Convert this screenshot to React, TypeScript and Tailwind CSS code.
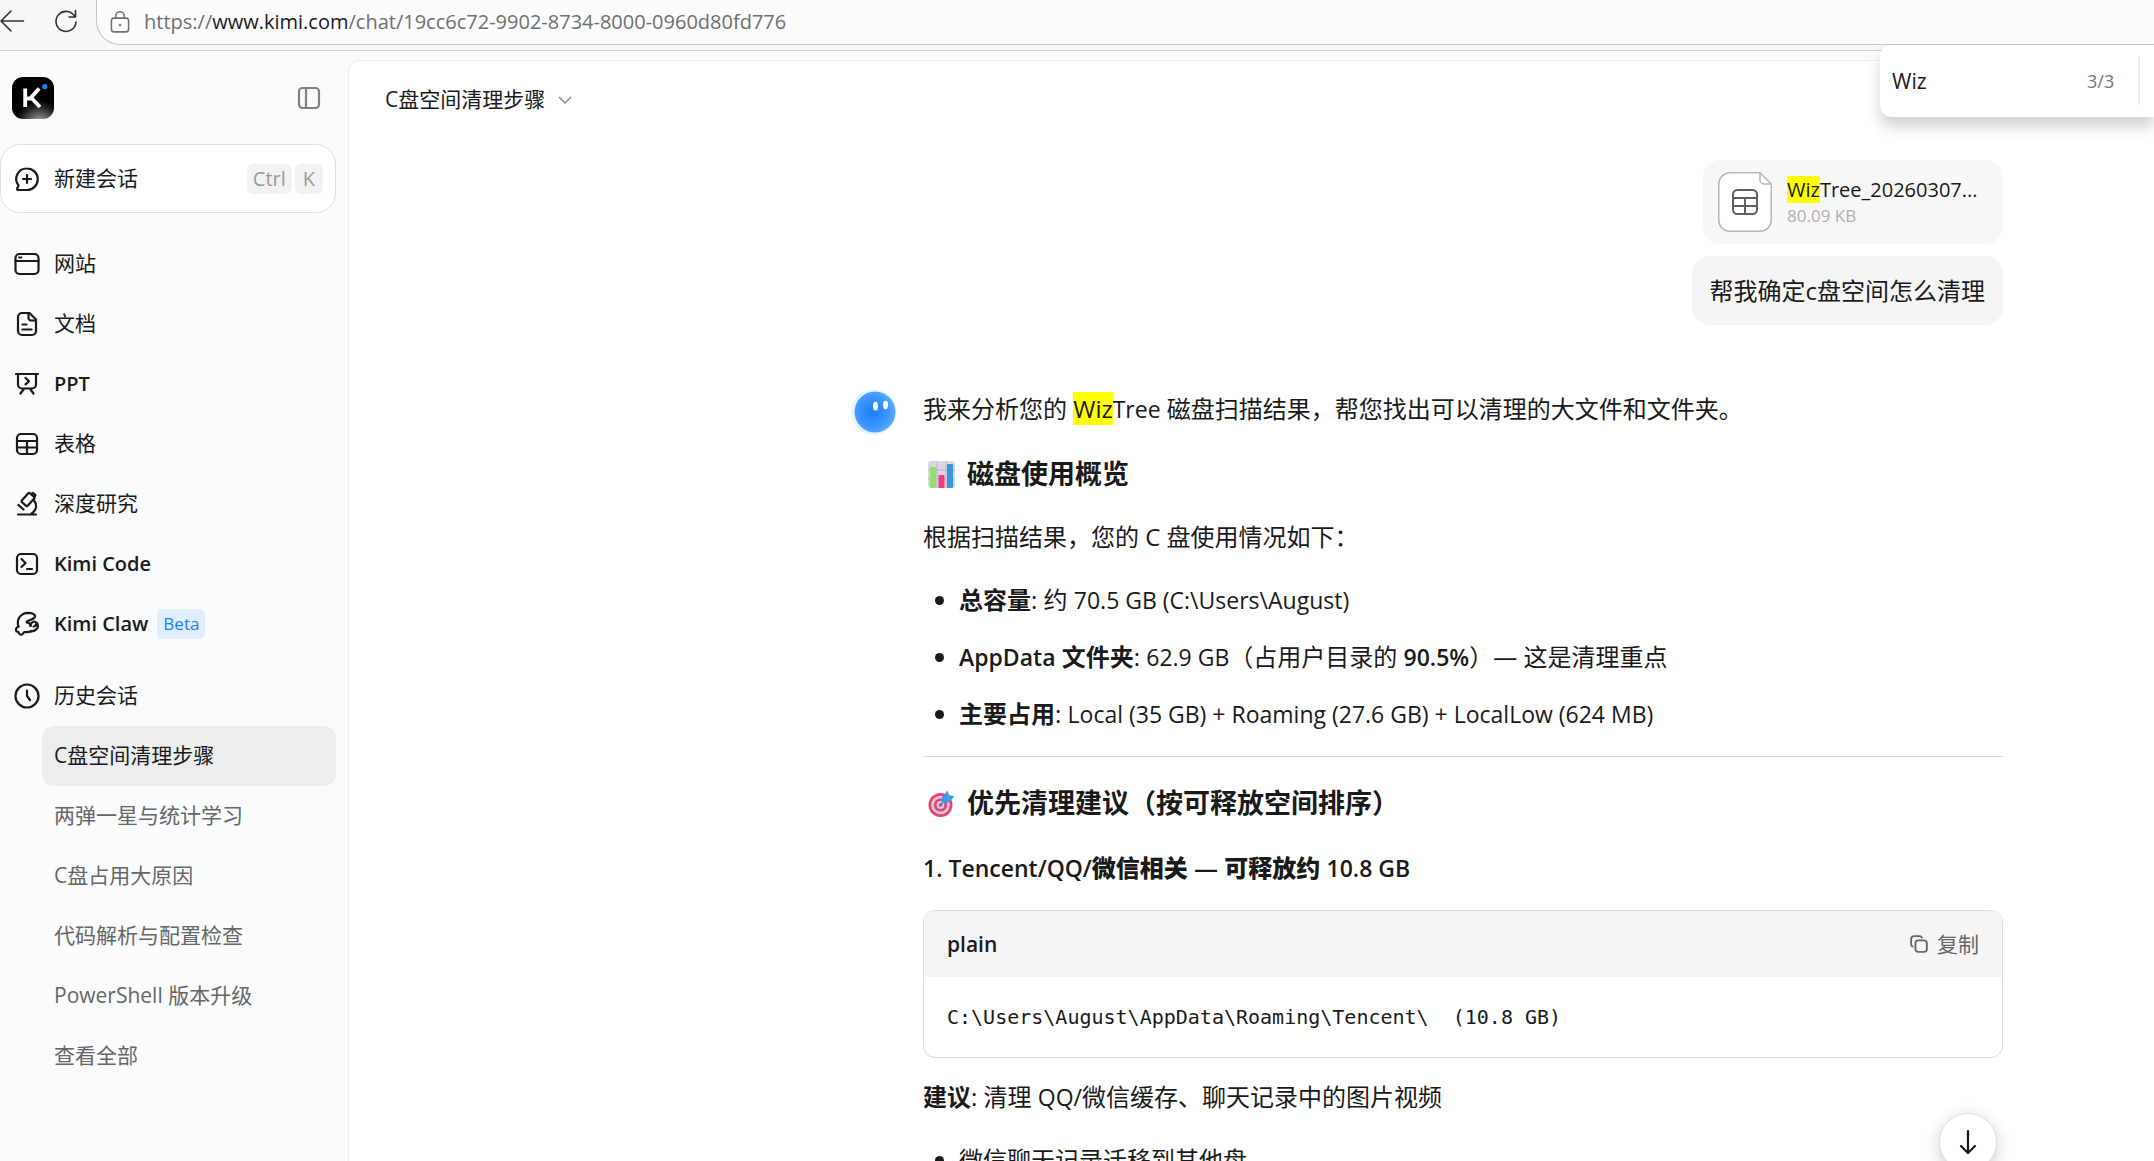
import React from "react";

type IconProps = { className?: string; children: React.ReactNode };

const Icon = ({ className = "size-7", children }: IconProps) => (
  <svg
    viewBox="0 0 28 28"
    fill="none"
    stroke="currentColor"
    strokeWidth="2.2"
    strokeLinecap="round"
    strokeLinejoin="round"
    className={`shrink-0 ${className}`}
    aria-hidden="true"
  >
    {children}
  </svg>
);

const navItems = [
  {
    label: "网站",
    icon: (
      <>
        <rect x="2.5" y="4" width="23" height="20" rx="4" />
        <path d="M2.5 11h23" />
        <path d="M6 7.500h2.500" strokeWidth="1.8" />
      </>
    ),
  },
  {
    label: "文档",
    icon: (
      <>
        <path d="M16.5 3H9a4 4 0 0 0-4 4v14a4 4 0 0 0 4 4h10a4 4 0 0 0 4-4V9.500z" />
        <path d="M15.5 3.500V8a2.500 2.500 0 0 0 2.500 2.500h4.500M9.500 14.500h4M9.500 19.500h9" />
      </>
    ),
  },
  {
    label: "PPT",
    latin: true,
    icon: (
      <>
        <path d="M3 4h22M5 4v10.500a4 4 0 0 0 4 4h10a4 4 0 0 0 4-4V4" />
        <path d="M12.500 8l3.500 3.200-3.500 3.200M10.500 19.500l-3 4M17.500 19.500l3 4" />
      </>
    ),
  },
  {
    label: "表格",
    icon: (
      <>
        <rect x="4" y="4" width="20" height="20" rx="4" />
        <path d="M4 11h20M4 17.500h20M14 11v13" />
      </>
    ),
  },
  {
    label: "深度研究",
    icon: (
      <>
        <rect x="11" y="3.500" width="8" height="12" rx="1.5" transform="rotate(42 15 9.5)" />
        <path d="M18.500 4l1.500-1 2.500 2-1 2" />
        <path d="M5.500 15l5 4.500M5 24.500h18M21 10.500c3.500 4.500 2.500 10-3 13.500" />
      </>
    ),
  },
  {
    label: "Kimi Code",
    latin: true,
    icon: (
      <>
        <rect x="4" y="4" width="20" height="20" rx="4" />
        <path d="M8.500 9l4 4-4 4M14 19h5" />
      </>
    ),
  },
  {
    label: "Kimi Claw",
    latin: true,
    beta: true,
    icon: (
      <>
        <path d="M5.500 16.500C3 9 8 3 15 2.800c4 0 7.500 1.500 7 4-.5 2-3 2.500-5.500 3.500-1.500.5-2.500 1-3 2 2.500.2 4 1.200 4 3.700" />
        <path d="M17.500 16c0-2.500 1.500-4 3.500-4.500 3 .5 4 2.500 4 4.500-.5 3-3.500 5-7 5.500M20.500 16.500c1.500 0 2.500-1 2.500-2.500" />
        <path d="M5.500 16.500c-2 .5-3.500 3-2 5l2 .5c0 2 2 3 3.500 2.500 1-.3 1-2 2.500-2.500 3 .5 5 0 7-1" />
      </>
    ),
  },
];

const historyItems = [
  "两弹一星与统计学习",
  "C盘占用大原因",
  "代码解析与配置检查",
  "PowerShell 版本升级",
  "查看全部",
];

const BrowserBar = () => (
  <div className="flex h-[51px] shrink-0 items-start border-b border-[#cfcfcf] bg-[#f7f7f7]">
    <button aria-label="返回" className="mt-[7px] w-7 text-[#303030]">
      <Icon>
        <path d="M23.500 14H1M11 4L1 14l10 10" strokeWidth="1.6" />
      </Icon>
    </button>
    <button aria-label="刷新" className="mt-[7px] ml-6 w-7 text-[#303030]">
      <Icon>
        <path d="M23 10A10 10 0 1 0 24 15M23.500 3.500V10H17" strokeWidth="1.6" />
      </Icon>
    </button>
    <div className="ml-4 flex h-[45px] flex-1 items-center gap-3 rounded-bl-[24px] border-b border-l border-[#c4c4c4] bg-[#fcfcfc] pl-[11px]">
      <Icon className="size-6 text-[#707070]">
        <rect x="4" y="9.500" width="20" height="16" rx="3" strokeWidth="1.8" />
        <path d="M9 9.500V7a5 5 0 0 1 10 0v2.500" strokeWidth="1.8" />
        <circle cx="14" cy="17.500" r="1" fill="currentColor" strokeWidth="1" />
      </Icon>
      <div role="textbox" aria-label="地址" className="text-xl whitespace-nowrap text-[#707070]">
        https://<span className="text-[#1b1b1b]">www.kimi.com</span>/chat/19cc6c72-9902-8734-8000-0960d80fd776
      </div>
    </div>
  </div>
);

const FindBar = () => (
  <div className="absolute top-[45px] right-0 flex h-[72px] w-[274px] items-center rounded-l-xl bg-white pl-3 shadow-[0_10px_14px_rgba(0,0,0,0.18)]">
    <input
      aria-label="在页面上查找"
      defaultValue="Wiz"
      className="w-[195px] bg-transparent pt-0.5 text-[21px] text-[#1b1b1b] outline-none"
    />
    <span className="text-lg text-[#767676]">3/3</span>
    <div className="ml-auto h-12 w-4 border-l-2 border-[#ebebeb]" />
  </div>
);

const Logo = () => (
  <svg viewBox="0 0 42 42" className="size-[42px]" role="img" aria-label="Kimi">
    <defs>
      <radialGradient id="moon" cx="0.65" cy="1.15" r="0.6">
        <stop offset="0" stopColor="#d0d0d0" />
        <stop offset="0.4" stopColor="#6a6a6a" />
        <stop offset="0.75" stopColor="#222" />
        <stop offset="1" stopColor="#000" />
      </radialGradient>
    </defs>
    <rect width="42" height="42" rx="11" fill="url(#moon)" />
    <path d="M13.200 11.500V30M27.200 11.500L18 21.500h-4.500M19 20.500L28 30" fill="none" stroke="#fff" strokeWidth="3.8" />
    <circle cx="32.700" cy="9.700" r="2.6" fill="#1783ff" />
  </svg>
);

const Sidebar = () => (
  <aside className="w-[348px] shrink-0 pr-3 text-[21px] text-[#1a1a1a]">
    <div className="flex items-center justify-between pt-[26px] pr-[13px] pl-3">
      <Logo />
      <button aria-label="收起侧边栏" className="text-[#808080]">
        <Icon>
          <rect x="4" y="4" width="20" height="20" rx="3.5" />
          <path d="M11 4v20" />
        </Icon>
      </button>
    </div>
    <button className="mt-[25px] flex h-[69px] w-[336px] items-center rounded-[20px] border border-[#e0e0e0] bg-white px-3 text-left">
      <Icon>
        <path d="M14 3.500A10.500 10.500 0 1 1 14 25H5a1 1 0 0 1-.8-1.500L5.500 20.500A10.500 10.500 0 0 1 14 3.500zM14 10v8M10 14h8" />
      </Icon>
      <span className="ml-[13px] flex-1">新建会话</span>
      <kbd className="rounded-md bg-[#f2f2f2] px-1.5 font-[inherit] text-xl leading-[30px] text-[#999]">Ctrl</kbd>
      <kbd className="ml-[3px] rounded-md bg-[#f2f2f2] px-2 font-[inherit] text-xl leading-[30px] text-[#999]">K</kbd>
    </button>
    <nav className="mt-[21px]">
      {navItems.map((item) => (
        <a key={item.label} href="#" className="flex h-[60px] items-center gap-[13px] pl-[13px]">
          <Icon>{item.icon}</Icon>
          <span className="flex items-center gap-[9px]">
            <span className={item.latin ? "text-xl font-semibold" : ""}>{item.label}</span>
            {item.beta && (
              <span className="rounded-md bg-[#e1edfb] px-1.5 text-[17px] leading-[30px] text-[#1783ff]">Beta</span>
            )}
          </span>
        </a>
      ))}
      <a href="#" className="mt-3 flex h-[60px] items-center gap-[13px] pl-[13px]">
        <Icon>
          <circle cx="14" cy="14" r="11.5" />
          <path d="M14 8.500V14l3 4" />
        </Icon>
        历史会话
      </a>
      <div className="pl-[42px]">
        <a href="#" className="flex h-[60px] items-center rounded-xl bg-[#ecedef] pl-3">
          C盘空间清理步骤
        </a>
        {historyItems.map((title) => (
          <a key={title} href="#" className="flex h-[60px] items-center pl-3 text-[#666]">
            {title}
          </a>
        ))}
      </div>
    </nav>
  </aside>
);

const Mark = ({ children }: { children: React.ReactNode }) => (
  <mark className="bg-[#ffff00] text-inherit">{children}</mark>
);

// latin runs sit a touch smaller than the chinese text around them
const En = ({ children }: { children: React.ReactNode }) => <span className="text-[23px]">{children}</span>;

const FileCard = () => (
  <div className="flex h-[84px] w-[300px] items-center gap-[15px] rounded-[18px] bg-[#f7f7f7] px-[15px]">
    <svg viewBox="0 0 54 60" className="h-[60px] w-[54px] shrink-0" fill="none" aria-hidden="true">
      <path
        d="M42 .75H12A11.250 11.250 0 0 0 .75 12v36A11.250 11.250 0 0 0 12 59.250h30A11.250 11.250 0 0 0 53.250 48V12z"
        fill="#fff"
        stroke="#b5b5b5"
        strokeWidth="1.5"
      />
      <path d="M42 .75V8a4 4 0 0 0 4 4h7.250" stroke="#b5b5b5" strokeWidth="1.5" />
      <rect x="15" y="18" width="24" height="24" rx="4.5" stroke="#606060" strokeWidth="2" />
      <path d="M15 26h24M15 34h24M27 26v16" stroke="#606060" strokeWidth="2" />
    </svg>
    <div className="min-w-0">
      <div className="truncate text-xl leading-7 text-[#1a1a1a]">
        <Mark>Wiz</Mark>Tree_20260307...
      </div>
      <div className="text-[17px] leading-6 text-[#b0b0b0]">80.09 KB</div>
    </div>
  </div>
);

const Avatar = () => (
  <svg viewBox="0 0 48 48" className="size-12 shrink-0" role="img" aria-label="Kimi">
    <defs>
      <radialGradient id="face" cx="0.45" cy="0.5" r="0.55">
        <stop offset="0" stopColor="#1a7dff" />
        <stop offset="0.7" stopColor="#3f97ff" />
        <stop offset="1" stopColor="#5cabff" />
      </radialGradient>
    </defs>
    <circle cx="23" cy="24" r="23" fill="#e6f4ff" />
    <circle cx="24" cy="24" r="20.5" fill="url(#face)" />
    <ellipse cx="24.500" cy="18" rx="2.5" ry="4.5" fill="#fff" />
    <ellipse cx="34.500" cy="17" rx="2.5" ry="4.2" fill="#fff" />
  </svg>
);

const ChartEmoji = () => (
  <svg viewBox="0 0 27 27" className="size-[27px]" aria-hidden="true">
    <rect width="27" height="27" rx="3" fill="#dcd6e4" />
    <path d="M9 0v27M18 0v27M0 9h27M0 18h27" stroke="#b9b2c4" />
    <rect x="2" y="6" width="6" height="21" rx="1" fill="#8fe068" />
    <rect x="10.500" y="14" width="6" height="13" rx="1" fill="#ea3f7c" />
    <rect x="19" y="3" width="6" height="24" rx="1" fill="#3b94e0" />
  </svg>
);

const TargetEmoji = () => (
  <svg viewBox="0 0 27 27" className="size-[27px]" aria-hidden="true">
    <circle cx="12.500" cy="15" r="12" fill="#e5446d" />
    <circle cx="12.500" cy="15" r="9.3" fill="#dccbe0" />
    <circle cx="12.500" cy="15" r="6.6" fill="#e5446d" />
    <circle cx="12.500" cy="15" r="3.9" fill="#dccbe0" />
    <circle cx="12.500" cy="15" r="1.8" fill="#e5446d" />
    <path d="M12.500 15L21 6" stroke="#2b7cd0" strokeWidth="1.5" />
    <path d="M14 12.500V8l5.500-7.500L21 5l5.500 1.500L20 13h-5z" fill="#3d9be9" />
  </svg>
);

const Heading = ({ icon, children }: { icon: React.ReactNode; children: React.ReactNode }) => (
  <h3 className="flex items-center gap-3 pl-[5px] text-[27px] leading-[42px] font-bold">
    {icon}
    {children}
  </h3>
);

const CodeBlock = () => (
  <div className="overflow-hidden rounded-xl border border-[#dcdcdc]">
    <div className="flex h-[66px] items-center justify-between bg-[#f5f5f5] px-[23px] text-[21px]">
      <span className="font-semibold">plain</span>
      <button className="flex items-center gap-2 text-[#666]">
        <Icon className="size-5">
          <rect x="9" y="9" width="16" height="16" rx="4" strokeWidth="2.6" />
          <path d="M5 17.500A3 3 0 0 1 3 15V7a4 4 0 0 1 4-4h8a3 3 0 0 1 3 2" strokeWidth="2.6" />
        </Icon>
        复制
      </button>
    </div>
    <pre className="px-[23px] font-['DejaVu_Sans_Mono','Noto_Sans_CJK_SC',monospace] text-xl leading-[80px]">
      {"C:\\Users\\August\\AppData\\Roaming\\Tencent\\  (10.8 GB)"}
    </pre>
  </div>
);

const Answer = () => (
  <div className="flex-1 text-2xl leading-[42px] text-[#1a1a1a]">
    <p>
      我来分析您的 <Mark>Wiz</Mark>
      <En>Tree</En> 磁盘扫描结果，帮您找出可以清理的大文件和文件夹。
    </p>
    <div className="mt-[23px]">
      <Heading icon={<ChartEmoji />}>磁盘使用概览</Heading>
    </div>
    <p className="mt-[21px]">根据扫描结果，您的 C 盘使用情况如下：</p>
    <ul className="mt-[21px] list-disc space-y-[15px] pl-9">
      <li>
        <strong>总容量</strong>: 约 <En>70.5 GB (C:\Users\August)</En>
      </li>
      <li>
        <strong className="font-semibold">
          <En>AppData</En>{" "}
        </strong>
        <strong>文件夹</strong>: <En>62.9 GB</En>（占用户目录的{" "}
        <strong className="font-semibold">
          <En>90.5%</En>
        </strong>
        ）— 这是清理重点
      </li>
      <li>
        <strong>主要占用</strong>: <En>Local (35 GB) + Roaming (27.6 GB) + LocalLow (624 MB)</En>
      </li>
    </ul>
    <hr className="mt-[21px] border-[#dcdcdc]" />
    <div className="mt-[25px]">
      <Heading icon={<TargetEmoji />}>优先清理建议（按可释放空间排序）</Heading>
    </div>
    <h4 className="mt-[23px] font-semibold">
      <En>1. Tencent/QQ/</En>
      <strong>微信相关</strong> — <strong>可释放约</strong> <En>10.8 GB</En>
    </h4>
    <div className="mt-[21px]">
      <CodeBlock />
    </div>
    <p className="mt-[18px]">
      <strong>建议</strong>: 清理 <En>QQ/</En>微信缓存、聊天记录中的图片视频
    </p>
    <ul className="mt-[21px] list-disc pl-9">
      <li>微信聊天记录迁移到其他盘</li>
    </ul>
  </div>
);

const Chat = () => (
  <main className="relative mt-[9px] min-w-0 flex-1 overflow-hidden rounded-tl-xl border-t border-l border-[#ebedf0] bg-white">
    <header className="flex h-[78px] items-center px-9">
      <button className="flex items-center gap-[13px] text-[21px] text-[#1a1a1a]">
        C盘空间清理步骤
        <svg viewBox="0 0 14 8" className="h-2 w-3.5" fill="none" stroke="#8c8c8c" strokeWidth="1.5" aria-hidden="true">
          <path d="M1 1l6 6 6-6" />
        </svg>
      </button>
    </header>
    <div className="ml-auto w-full max-w-[1303px] pt-[21px] pr-[151px]">
      <div className="flex flex-col items-end gap-3">
        <FileCard />
        <div className="rounded-[18px] bg-[#f5f5f5] px-[18px] text-2xl leading-[69px] text-[#1a1a1a]">
          帮我确定c盘空间怎么清理
        </div>
      </div>
      <div className="mt-[63px] flex items-start gap-6">
        <Avatar />
        <Answer />
      </div>
    </div>
    <button
      aria-label="滚动到底部"
      className="absolute right-[157px] -bottom-[10px] flex size-[58px] items-center justify-center rounded-full border border-[#e0e0e0] bg-white text-[#1a1a1a] shadow-[0_4px_16px_rgba(0,0,0,0.2)]"
    >
      <Icon>
        <path d="M14 3v22M7 18l7 7 7-7" />
      </Icon>
    </button>
  </main>
);

const App = () => (
  <div className="relative flex h-screen flex-col overflow-hidden bg-[#fafbfd] font-['Open_Sans','Noto_Sans_CJK_SC',sans-serif]">
    <BrowserBar />
    <div className="flex min-h-0 flex-1">
      <Sidebar />
      <Chat />
    </div>
    <FindBar />
  </div>
);

export default App;
